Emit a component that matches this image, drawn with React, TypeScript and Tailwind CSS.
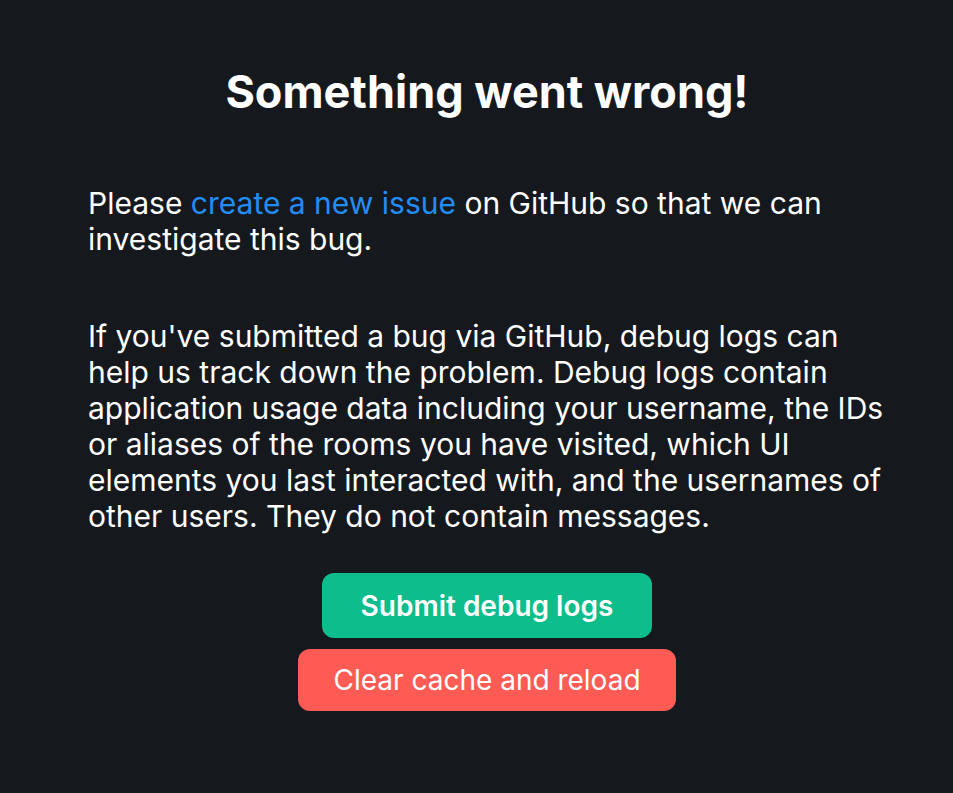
import React from 'react';

const App = () => {
  return (
    <div className="min-h-screen w-full bg-[#15191e] text-white" style={{ fontFamily: 'Inter, "Noto Sans", sans-serif' }}>
      <div className="ml-[88px] w-[798px] pt-[62px]">
        <h1 className="text-center text-[45px] font-bold leading-[60px]">Something went wrong!</h1>
        <p className="mt-[63px] text-[30px] leading-[36px]">
          Please <a href="#" className="text-[#238cf5]">create a new issue</a> on GitHub so that we can investigate this bug.
        </p>
        <p className="mt-[61px] text-[30px] leading-[36px]">
          If you've submitted a bug via GitHub, debug logs can help us track down the problem. Debug logs contain
          application usage data including your username, the IDs or aliases of the rooms you have visited, which UI
          elements you last interacted with, and the usernames of other users. They do not contain messages.
        </p>
        <div className="mt-[39px] flex flex-col items-center gap-[11px]">
          <button className="h-[65px] w-[330px] rounded-[12px] bg-[#0dbd8b] text-[28px] font-semibold text-white">
            Submit debug logs
          </button>
          <button className="h-[62px] w-[378px] rounded-[12px] bg-[#ff5b55] text-[28px] text-white">
            Clear cache and reload
          </button>
        </div>
      </div>
    </div>
  );
};

export default App;
